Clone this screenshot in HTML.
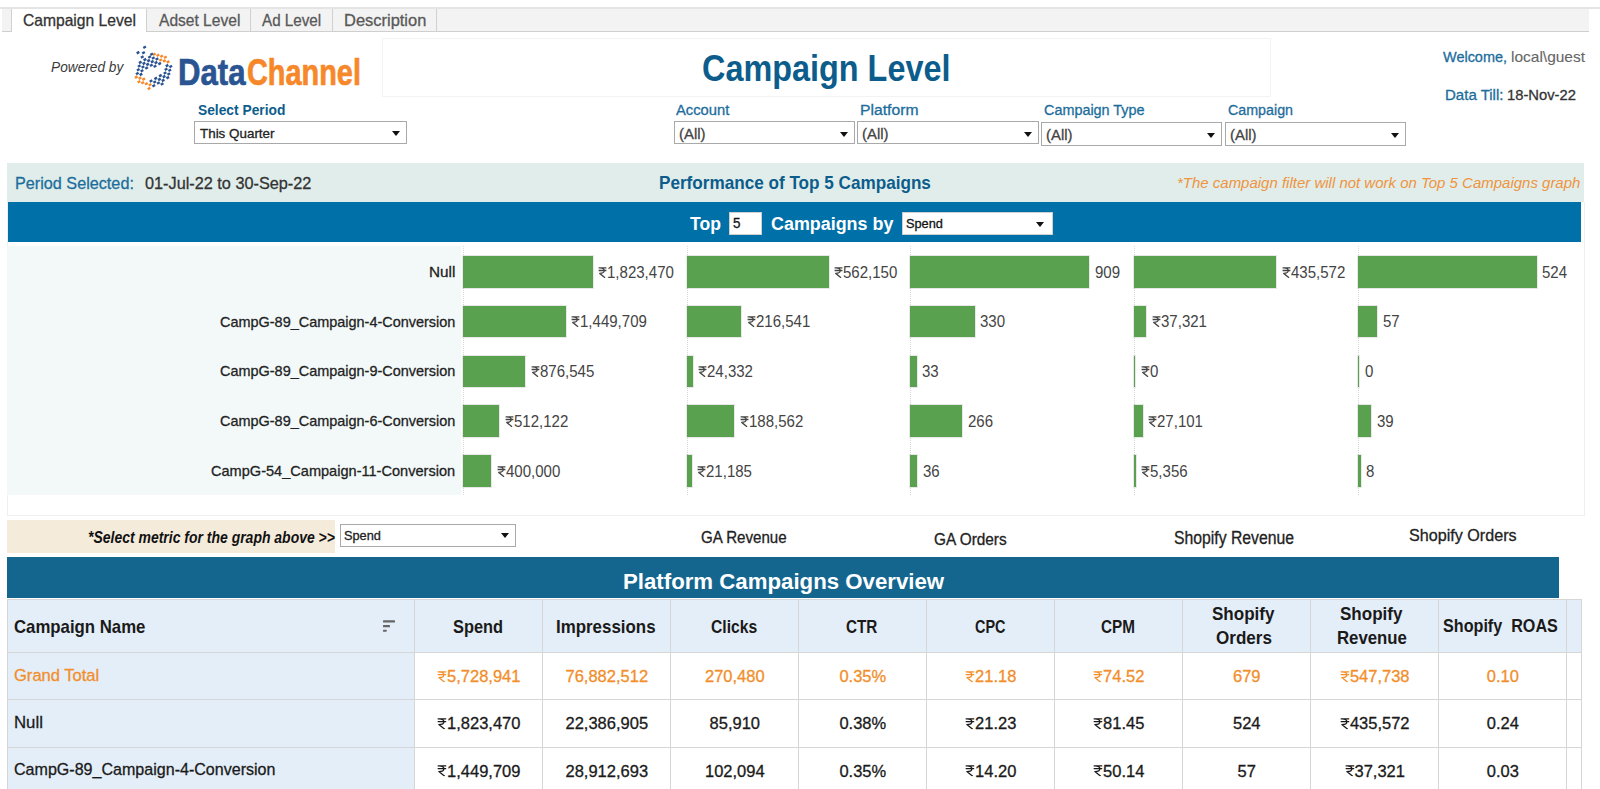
<!DOCTYPE html>
<html><head><meta charset="utf-8"><title>Campaign Level</title>
<style>
html,body{margin:0;padding:0;background:#fff;}
body{width:1600px;height:789px;overflow:hidden;position:relative;font-family:"Liberation Sans",sans-serif;}
.t{position:absolute;white-space:pre;line-height:1;transform-origin:0 0;}
.b{position:absolute;}
.rp{width:0.6em;height:0.688em;vertical-align:baseline;overflow:visible;}
</style></head><body>
<svg width="0" height="0" style="position:absolute"><defs><symbol id="rup" viewBox="0 0 60 69"><path d="M4,5 H56 M4,22 H56 M13,5 C52,5 52,40 11,40 L47,68" fill="none" stroke="currentColor" stroke-width="8" stroke-linejoin="round"/></symbol></defs></svg>
<div class="b" style="left:0px;top:7px;width:1600px;height:2px;background:#e4e4e4;"></div>
<div class="b" style="left:2px;top:9px;width:1587px;height:22px;background:#f3f3f3;"></div>
<div class="b" style="left:2px;top:31px;width:1587px;height:1px;background:#cfcfcf;"></div>
<div class="b" style="left:11px;top:9px;width:1px;height:23px;background:#d0d0d0;"></div>
<div class="b" style="left:12px;top:9px;width:134px;height:23px;background:#ffffff;"></div>
<div class="b" style="left:146px;top:9px;width:1px;height:22px;background:#d0d0d0;"></div>
<div class="b" style="left:250px;top:9px;width:1px;height:22px;background:#d0d0d0;"></div>
<div class="b" style="left:332px;top:9px;width:1px;height:22px;background:#d0d0d0;"></div>
<div class="b" style="left:436px;top:9px;width:1px;height:22px;background:#d0d0d0;"></div>
<div class="t" style="left:23.00px;top:11.82px;font-size:16.28px;color:#333;transform:scaleX(0.9605);-webkit-text-stroke:0.3px #333;">Campaign Level</div>
<div class="t" style="left:158.60px;top:11.82px;font-size:16.28px;color:#595959;transform:scaleX(0.9569);-webkit-text-stroke:0.3px #595959;">Adset Level</div>
<div class="t" style="left:262.40px;top:11.82px;font-size:16.28px;color:#595959;transform:scaleX(0.9344);-webkit-text-stroke:0.3px #595959;">Ad Level</div>
<div class="t" style="left:343.60px;top:11.82px;font-size:16.28px;color:#595959;transform:scaleX(1.0119);-webkit-text-stroke:0.3px #595959;">Description</div>
<div class="b" style="left:382px;top:38px;width:889px;height:59px;border:1px solid #f3f3f3;box-sizing:border-box;"></div>
<div class="t" style="left:50.50px;top:60.32px;font-size:14.97px;color:#3a3a3a;font-style:italic;transform:scaleX(0.9145);">Powered by</div>
<svg class="b" style="left:130px;top:42px;width:50px;height:52px" viewBox="130 42 50 52"><rect x="134.78" y="75.91" width="3.0" height="2.4" fill="#f7892b" transform="rotate(-30 136.28 77.11)"/><rect x="137.48" y="80.59" width="3.0" height="2.4" fill="#f7892b" transform="rotate(-30 138.98 81.79)"/><rect x="135.77" y="72.22" width="3.0" height="2.4" fill="#2b5592" transform="rotate(-30 137.27 73.42)"/><rect x="138.47" y="76.90" width="3.0" height="2.4" fill="#f7892b" transform="rotate(-30 139.97 78.10)"/><rect x="141.17" y="81.58" width="3.0" height="2.4" fill="#f7892b" transform="rotate(-30 142.67 82.78)"/><rect x="136.76" y="68.54" width="3.0" height="2.4" fill="#2b5592" transform="rotate(-30 138.26 69.74)"/><rect x="139.46" y="73.21" width="3.0" height="2.4" fill="#2b5592" transform="rotate(-30 140.96 74.41)"/><rect x="142.16" y="77.89" width="3.0" height="2.4" fill="#f7892b" transform="rotate(-30 143.66 79.09)"/><rect x="144.86" y="82.56" width="3.0" height="2.4" fill="#f7892b" transform="rotate(-30 146.36 83.76)"/><rect x="147.56" y="87.24" width="3.0" height="2.4" fill="#f7892b" transform="rotate(-30 149.06 88.44)"/><rect x="137.75" y="64.85" width="3.0" height="2.4" fill="#2b5592" transform="rotate(-30 139.25 66.05)"/><rect x="140.45" y="69.52" width="3.0" height="2.4" fill="#2b5592" transform="rotate(-30 141.95 70.72)"/><rect x="148.55" y="83.55" width="3.0" height="2.4" fill="#f7892b" transform="rotate(-30 150.05 84.75)"/><rect x="138.74" y="61.16" width="3.0" height="2.4" fill="#2b5592" transform="rotate(-30 140.24 62.36)"/><rect x="141.44" y="65.84" width="3.0" height="2.4" fill="#2b5592" transform="rotate(-30 142.94 67.04)"/><rect x="149.54" y="79.86" width="3.0" height="2.4" fill="#2b5592" transform="rotate(-30 151.04 81.06)"/><rect x="152.24" y="84.54" width="3.0" height="2.4" fill="#2b5592" transform="rotate(-30 153.74 85.74)"/><rect x="142.42" y="62.15" width="3.0" height="2.4" fill="#2b5592" transform="rotate(-30 143.92 63.35)"/><rect x="145.12" y="66.82" width="3.0" height="2.4" fill="#2b5592" transform="rotate(-30 146.62 68.02)"/><rect x="153.22" y="80.85" width="3.0" height="2.4" fill="#2b5592" transform="rotate(-30 154.72 82.05)"/><rect x="143.41" y="58.46" width="3.0" height="2.4" fill="#2b5592" transform="rotate(-30 144.91 59.66)"/><rect x="146.11" y="63.14" width="3.0" height="2.4" fill="#2b5592" transform="rotate(-30 147.61 64.34)"/><rect x="154.21" y="77.16" width="3.0" height="2.4" fill="#2b5592" transform="rotate(-30 155.71 78.36)"/><rect x="156.91" y="81.84" width="3.0" height="2.4" fill="#2b5592" transform="rotate(-30 158.41 83.04)"/><rect x="147.10" y="59.45" width="3.0" height="2.4" fill="#2b5592" transform="rotate(-30 148.60 60.65)"/><rect x="149.80" y="64.12" width="3.0" height="2.4" fill="#2b5592" transform="rotate(-30 151.30 65.32)"/><rect x="157.90" y="78.15" width="3.0" height="2.4" fill="#2b5592" transform="rotate(-30 159.40 79.35)"/><rect x="160.60" y="82.83" width="3.0" height="2.4" fill="#2b5592" transform="rotate(-30 162.10 84.03)"/><rect x="148.09" y="55.76" width="3.0" height="2.4" fill="#2b5592" transform="rotate(-30 149.59 56.96)"/><rect x="150.79" y="60.44" width="3.0" height="2.4" fill="#2b5592" transform="rotate(-30 152.29 61.64)"/><rect x="153.49" y="65.11" width="3.0" height="2.4" fill="#2b5592" transform="rotate(-30 154.99 66.31)"/><rect x="158.89" y="74.46" width="3.0" height="2.4" fill="#2b5592" transform="rotate(-30 160.39 75.66)"/><rect x="161.59" y="79.14" width="3.0" height="2.4" fill="#2b5592" transform="rotate(-30 163.09 80.34)"/><rect x="151.78" y="56.75" width="3.0" height="2.4" fill="#2b5592" transform="rotate(-30 153.28 57.95)"/><rect x="154.48" y="61.42" width="3.0" height="2.4" fill="#2b5592" transform="rotate(-30 155.98 62.62)"/><rect x="162.58" y="75.45" width="3.0" height="2.4" fill="#2b5592" transform="rotate(-30 164.08 76.65)"/><rect x="152.76" y="53.06" width="3.0" height="2.4" fill="#f7892b" transform="rotate(-30 154.26 54.26)"/><rect x="155.46" y="57.74" width="3.0" height="2.4" fill="#2b5592" transform="rotate(-30 156.96 58.94)"/><rect x="158.16" y="62.41" width="3.0" height="2.4" fill="#2b5592" transform="rotate(-30 159.66 63.61)"/><rect x="163.56" y="71.76" width="3.0" height="2.4" fill="#2b5592" transform="rotate(-30 165.06 72.96)"/><rect x="166.26" y="76.44" width="3.0" height="2.4" fill="#2b5592" transform="rotate(-30 167.76 77.64)"/><rect x="156.45" y="54.05" width="3.0" height="2.4" fill="#f7892b" transform="rotate(-30 157.95 55.25)"/><rect x="159.15" y="58.72" width="3.0" height="2.4" fill="#f7892b" transform="rotate(-30 160.65 59.92)"/><rect x="164.55" y="68.08" width="3.0" height="2.4" fill="#2b5592" transform="rotate(-30 166.05 69.28)"/><rect x="167.25" y="72.75" width="3.0" height="2.4" fill="#2b5592" transform="rotate(-30 168.75 73.95)"/><rect x="160.14" y="55.04" width="3.0" height="2.4" fill="#f7892b" transform="rotate(-30 161.64 56.24)"/><rect x="162.84" y="59.71" width="3.0" height="2.4" fill="#f7892b" transform="rotate(-30 164.34 60.91)"/><rect x="165.54" y="64.39" width="3.0" height="2.4" fill="#2b5592" transform="rotate(-30 167.04 65.59)"/><rect x="168.24" y="69.06" width="3.0" height="2.4" fill="#2b5592" transform="rotate(-30 169.74 70.26)"/><rect x="163.83" y="56.02" width="3.0" height="2.4" fill="#f7892b" transform="rotate(-30 165.33 57.22)"/><rect x="166.53" y="60.70" width="3.0" height="2.4" fill="#f7892b" transform="rotate(-30 168.03 61.90)"/><rect x="169.23" y="65.38" width="3.0" height="2.4" fill="#2b5592" transform="rotate(-30 170.73 66.58)"/><rect x="143.10" y="46.10" width="3.0" height="2.4" fill="#2b5592" transform="rotate(-30 144.60 47.30)"/><rect x="136.50" y="51.40" width="3.0" height="2.4" fill="#2b5592" transform="rotate(-30 138.00 52.60)"/><rect x="142.00" y="51.60" width="3.0" height="2.4" fill="#2b5592" transform="rotate(-30 143.50 52.80)"/><rect x="140.70" y="55.80" width="3.0" height="2.4" fill="#2b5592" transform="rotate(-30 142.20 57.00)"/><rect x="150.10" y="53.00" width="3.0" height="2.4" fill="#2b5592" transform="rotate(-30 151.60 54.20)"/></svg>
<div class="t" style="left:177.60px;top:54.12px;font-size:37.06px;color:#2a5592;font-weight:bold;transform:scaleX(0.8402);-webkit-text-stroke:0.7px #2a5592;">Data</div>
<div class="t" style="left:247.40px;top:54.12px;font-size:37.06px;color:#f7882a;font-weight:bold;transform:scaleX(0.7797);-webkit-text-stroke:0.7px #f7882a;">Channel</div>
<div class="t" style="left:702.30px;top:50.83px;font-size:36.34px;color:#0c5d8c;font-weight:bold;transform:scaleX(0.8917);">Campaign Level</div>
<div class="t" style="left:1443.30px;top:49.82px;font-size:14.97px;color:#1c6d9c;transform:scaleX(0.9656);-webkit-text-stroke:0.3px #1c6d9c;">Welcome,</div>
<div class="t" style="left:1511.00px;top:49.82px;font-size:14.97px;color:#666;transform:scaleX(1.0339);-webkit-text-stroke:0.1px #666;">local\guest</div>
<div class="t" style="left:1444.90px;top:88.17px;font-size:14.68px;color:#1c6d9c;transform:scaleX(1.0243);-webkit-text-stroke:0.3px #1c6d9c;">Data Till:</div>
<div class="t" style="left:1507.00px;top:88.17px;font-size:14.68px;color:#333;transform:scaleX(1.0067);-webkit-text-stroke:0.3px #333;">18-Nov-22</div>
<div class="t" style="left:198.30px;top:103.24px;font-size:14.24px;color:#0c5d8c;font-weight:bold;transform:scaleX(0.9684);">Select Period</div>
<div class="b" style="left:194px;top:121px;width:213px;height:23px;background:#fff;border:1px solid #a9a9a9;box-sizing:border-box;"></div>
<div class="t" style="left:199.50px;top:127.22px;font-size:13.08px;color:#222;transform:scaleX(1.0248);-webkit-text-stroke:0.3px #222;">This Quarter</div>
<div class="b" style="left:392px;top:131px;width:0;height:0;border-left:4px solid transparent;border-right:4px solid transparent;border-top:5px solid #111;"></div>
<div class="t" style="left:676.25px;top:103.20px;font-size:14.83px;color:#1c6d9c;transform:scaleX(0.9940);-webkit-text-stroke:0.3px #1c6d9c;">Account</div>
<div class="b" style="left:674px;top:121px;width:181px;height:23px;background:#fff;border:1px solid #a9a9a9;box-sizing:border-box;"></div>
<div class="t" style="left:678.50px;top:126.89px;font-size:14.53px;color:#444;transform:scaleX(1.0257);-webkit-text-stroke:0.3px #444;">(All)</div>
<div class="b" style="left:840px;top:131.5px;width:0;height:0;border-left:4px solid transparent;border-right:4px solid transparent;border-top:5px solid #111;"></div>
<div class="t" style="left:860.00px;top:103.20px;font-size:14.83px;color:#1c6d9c;transform:scaleX(1.0598);-webkit-text-stroke:0.3px #1c6d9c;">Platform</div>
<div class="b" style="left:857px;top:121px;width:182px;height:23px;background:#fff;border:1px solid #a9a9a9;box-sizing:border-box;"></div>
<div class="t" style="left:861.50px;top:126.89px;font-size:14.53px;color:#444;transform:scaleX(1.0257);-webkit-text-stroke:0.3px #444;">(All)</div>
<div class="b" style="left:1024px;top:131.5px;width:0;height:0;border-left:4px solid transparent;border-right:4px solid transparent;border-top:5px solid #111;"></div>
<div class="t" style="left:1043.75px;top:103.20px;font-size:14.83px;color:#1c6d9c;transform:scaleX(0.9703);-webkit-text-stroke:0.3px #1c6d9c;">Campaign Type</div>
<div class="b" style="left:1041px;top:122px;width:181px;height:24px;background:#fff;border:1px solid #a9a9a9;box-sizing:border-box;"></div>
<div class="t" style="left:1045.50px;top:127.89px;font-size:14.53px;color:#444;transform:scaleX(1.0257);-webkit-text-stroke:0.3px #444;">(All)</div>
<div class="b" style="left:1207px;top:132.5px;width:0;height:0;border-left:4px solid transparent;border-right:4px solid transparent;border-top:5px solid #111;"></div>
<div class="t" style="left:1227.50px;top:103.20px;font-size:14.83px;color:#1c6d9c;transform:scaleX(0.9618);-webkit-text-stroke:0.3px #1c6d9c;">Campaign</div>
<div class="b" style="left:1225px;top:122px;width:181px;height:24px;background:#fff;border:1px solid #a9a9a9;box-sizing:border-box;"></div>
<div class="t" style="left:1229.50px;top:127.89px;font-size:14.53px;color:#444;transform:scaleX(1.0257);-webkit-text-stroke:0.3px #444;">(All)</div>
<div class="b" style="left:1391px;top:132.5px;width:0;height:0;border-left:4px solid transparent;border-right:4px solid transparent;border-top:5px solid #111;"></div>
<div class="b" style="left:7px;top:163px;width:1577px;height:39px;background:#e0edea;"></div>
<div class="t" style="left:14.85px;top:175.01px;font-size:17.30px;color:#1c6d9c;transform:scaleX(0.9376);-webkit-text-stroke:0.3px #1c6d9c;">Period Selected:</div>
<div class="t" style="left:145.40px;top:175.01px;font-size:17.30px;color:#333;transform:scaleX(0.9411);-webkit-text-stroke:0.3px #333;">01-Jul-22 to 30-Sep-22</div>
<div class="t" style="left:659.00px;top:174.14px;font-size:18.02px;color:#0c5d8c;font-weight:bold;transform:scaleX(0.9507);">Performance of Top 5 Campaigns</div>
<div class="t" style="left:1176.50px;top:174.58px;font-size:15.26px;color:#ef9440;font-style:italic;transform:scaleX(0.9825);">*The campaign filter will not work on Top 5 Campaigns graph</div>
<div class="b" style="left:8px;top:202px;width:1573px;height:40px;background:#0070a9;"></div>
<div class="t" style="left:690.00px;top:214.90px;font-size:18.90px;color:#fff;font-weight:bold;transform:scaleX(0.9300);">Top</div>
<div class="b" style="left:729px;top:212px;width:33px;height:23px;background:#fff;border:1px solid #cfcfcf;box-sizing:border-box;"></div>
<div class="t" style="left:733.40px;top:216.19px;font-size:14.53px;color:#111;transform:scaleX(0.9278);-webkit-text-stroke:0.3px #111;">5</div>
<div class="t" style="left:771.40px;top:214.90px;font-size:18.90px;color:#fff;font-weight:bold;transform:scaleX(0.9477);">Campaigns by</div>
<div class="b" style="left:902px;top:212px;width:151px;height:23px;background:#fff;border:1px solid #cfcfcf;box-sizing:border-box;"></div>
<div class="t" style="left:905.60px;top:217.42px;font-size:13.08px;color:#111;transform:scaleX(0.9755);-webkit-text-stroke:0.3px #111;">Spend</div>
<div class="b" style="left:1036px;top:222px;width:0;height:0;border-left:4px solid transparent;border-right:4px solid transparent;border-top:5px solid #111;"></div>
<div class="b" style="left:7px;top:202px;width:1578px;height:314px;border-left:1px solid #efefef;border-right:1px solid #efefef;border-bottom:1px solid #efefef;box-sizing:border-box;"></div>
<div class="b" style="left:7px;top:246px;width:454px;height:249px;background:#f3f9f9;"></div>
<div class="b" style="left:463.0px;top:246px;width:0;height:249px;border-left:1px dotted #d8d8d8;"></div>
<div class="b" style="left:686.5px;top:246px;width:0;height:249px;border-left:1px dotted #d8d8d8;"></div>
<div class="b" style="left:910.0px;top:246px;width:0;height:249px;border-left:1px dotted #d8d8d8;"></div>
<div class="b" style="left:1134.0px;top:246px;width:0;height:249px;border-left:1px dotted #d8d8d8;"></div>
<div class="b" style="left:1358.0px;top:246px;width:0;height:249px;border-left:1px dotted #d8d8d8;"></div>
<div class="t" style="left:429.20px;top:263.95px;font-size:15.41px;color:#222;transform:scaleX(0.9909);-webkit-text-stroke:0.3px #222;">Null</div>
<div class="t" style="left:220.10px;top:313.75px;font-size:15.41px;color:#222;transform:scaleX(0.9382);-webkit-text-stroke:0.3px #222;">CampG-89_Campaign-4-Conversion</div>
<div class="t" style="left:220.10px;top:363.45px;font-size:15.41px;color:#222;transform:scaleX(0.9382);-webkit-text-stroke:0.3px #222;">CampG-89_Campaign-9-Conversion</div>
<div class="t" style="left:220.10px;top:413.15px;font-size:15.41px;color:#222;transform:scaleX(0.9382);-webkit-text-stroke:0.3px #222;">CampG-89_Campaign-6-Conversion</div>
<div class="t" style="left:211.40px;top:462.95px;font-size:15.41px;color:#222;transform:scaleX(0.9449);-webkit-text-stroke:0.3px #222;">CampG-54_Campaign-11-Conversion</div>
<div class="b" style="left:463.0px;top:256.0px;width:129.5px;height:31.5px;background:#59a14f;box-shadow:0 0 0 1px rgba(0,0,0,0.09);"></div>
<div class="t" style="left:598.00px;top:264.66px;font-size:15.99px;color:#444;transform:scaleX(0.9400);"><svg class="rp" viewBox="0 0 60 69"><use href="#rup"/></svg>1,823,470</div>
<div class="b" style="left:463.0px;top:305.8px;width:103.0px;height:31.5px;background:#59a14f;box-shadow:0 0 0 1px rgba(0,0,0,0.09);"></div>
<div class="t" style="left:571.46px;top:314.46px;font-size:15.99px;color:#444;transform:scaleX(0.9400);"><svg class="rp" viewBox="0 0 60 69"><use href="#rup"/></svg>1,449,709</div>
<div class="b" style="left:463.0px;top:355.5px;width:62.3px;height:31.5px;background:#59a14f;box-shadow:0 0 0 1px rgba(0,0,0,0.09);"></div>
<div class="t" style="left:530.75px;top:364.16px;font-size:15.99px;color:#444;transform:scaleX(0.9400);"><svg class="rp" viewBox="0 0 60 69"><use href="#rup"/></svg>876,545</div>
<div class="b" style="left:463.0px;top:405.2px;width:36.4px;height:31.5px;background:#59a14f;box-shadow:0 0 0 1px rgba(0,0,0,0.09);"></div>
<div class="t" style="left:504.87px;top:413.86px;font-size:15.99px;color:#444;transform:scaleX(0.9400);"><svg class="rp" viewBox="0 0 60 69"><use href="#rup"/></svg>512,122</div>
<div class="b" style="left:463.0px;top:455.0px;width:28.4px;height:31.5px;background:#59a14f;box-shadow:0 0 0 1px rgba(0,0,0,0.09);"></div>
<div class="t" style="left:496.91px;top:463.66px;font-size:15.99px;color:#444;transform:scaleX(0.9400);"><svg class="rp" viewBox="0 0 60 69"><use href="#rup"/></svg>400,000</div>
<div class="b" style="left:686.5px;top:256.0px;width:142.0px;height:31.5px;background:#59a14f;box-shadow:0 0 0 1px rgba(0,0,0,0.09);"></div>
<div class="t" style="left:834.00px;top:264.66px;font-size:15.99px;color:#444;transform:scaleX(0.9400);"><svg class="rp" viewBox="0 0 60 69"><use href="#rup"/></svg>562,150</div>
<div class="b" style="left:686.5px;top:305.8px;width:54.7px;height:31.5px;background:#59a14f;box-shadow:0 0 0 1px rgba(0,0,0,0.09);"></div>
<div class="t" style="left:746.70px;top:314.46px;font-size:15.99px;color:#444;transform:scaleX(0.9400);"><svg class="rp" viewBox="0 0 60 69"><use href="#rup"/></svg>216,541</div>
<div class="b" style="left:686.5px;top:355.5px;width:6.1px;height:31.5px;background:#59a14f;box-shadow:0 0 0 1px rgba(0,0,0,0.09);"></div>
<div class="t" style="left:698.15px;top:364.16px;font-size:15.99px;color:#444;transform:scaleX(0.9400);"><svg class="rp" viewBox="0 0 60 69"><use href="#rup"/></svg>24,332</div>
<div class="b" style="left:686.5px;top:405.2px;width:47.6px;height:31.5px;background:#59a14f;box-shadow:0 0 0 1px rgba(0,0,0,0.09);"></div>
<div class="t" style="left:739.63px;top:413.86px;font-size:15.99px;color:#444;transform:scaleX(0.9400);"><svg class="rp" viewBox="0 0 60 69"><use href="#rup"/></svg>188,562</div>
<div class="b" style="left:686.5px;top:455.0px;width:5.4px;height:31.5px;background:#59a14f;box-shadow:0 0 0 1px rgba(0,0,0,0.09);"></div>
<div class="t" style="left:697.35px;top:463.66px;font-size:15.99px;color:#444;transform:scaleX(0.9400);"><svg class="rp" viewBox="0 0 60 69"><use href="#rup"/></svg>21,185</div>
<div class="b" style="left:910.0px;top:256.0px;width:179.0px;height:31.5px;background:#59a14f;box-shadow:0 0 0 1px rgba(0,0,0,0.09);"></div>
<div class="t" style="left:1094.50px;top:264.66px;font-size:15.99px;color:#444;transform:scaleX(0.9400);">909</div>
<div class="b" style="left:910.0px;top:305.8px;width:65.0px;height:31.5px;background:#59a14f;box-shadow:0 0 0 1px rgba(0,0,0,0.09);"></div>
<div class="t" style="left:980.48px;top:314.46px;font-size:15.99px;color:#444;transform:scaleX(0.9400);">330</div>
<div class="b" style="left:910.0px;top:355.5px;width:6.5px;height:31.5px;background:#59a14f;box-shadow:0 0 0 1px rgba(0,0,0,0.09);"></div>
<div class="t" style="left:922.00px;top:364.16px;font-size:15.99px;color:#444;transform:scaleX(0.9400);">33</div>
<div class="b" style="left:910.0px;top:405.2px;width:52.4px;height:31.5px;background:#59a14f;box-shadow:0 0 0 1px rgba(0,0,0,0.09);"></div>
<div class="t" style="left:967.88px;top:413.86px;font-size:15.99px;color:#444;transform:scaleX(0.9400);">266</div>
<div class="b" style="left:910.0px;top:455.0px;width:7.1px;height:31.5px;background:#59a14f;box-shadow:0 0 0 1px rgba(0,0,0,0.09);"></div>
<div class="t" style="left:922.59px;top:463.66px;font-size:15.99px;color:#444;transform:scaleX(0.9400);">36</div>
<div class="b" style="left:1134.0px;top:256.0px;width:142.0px;height:31.5px;background:#59a14f;box-shadow:0 0 0 1px rgba(0,0,0,0.09);"></div>
<div class="t" style="left:1281.50px;top:264.66px;font-size:15.99px;color:#444;transform:scaleX(0.9400);"><svg class="rp" viewBox="0 0 60 69"><use href="#rup"/></svg>435,572</div>
<div class="b" style="left:1134.0px;top:305.8px;width:12.2px;height:31.5px;background:#59a14f;box-shadow:0 0 0 1px rgba(0,0,0,0.09);"></div>
<div class="t" style="left:1151.67px;top:314.46px;font-size:15.99px;color:#444;transform:scaleX(0.9400);"><svg class="rp" viewBox="0 0 60 69"><use href="#rup"/></svg>37,321</div>
<div class="b" style="left:1134.0px;top:355.5px;width:1.2px;height:31.5px;background:#59a14f;box-shadow:0 0 0 1px rgba(0,0,0,0.09);"></div>
<div class="t" style="left:1140.70px;top:364.16px;font-size:15.99px;color:#444;transform:scaleX(0.9400);"><svg class="rp" viewBox="0 0 60 69"><use href="#rup"/></svg>0</div>
<div class="b" style="left:1134.0px;top:405.2px;width:8.8px;height:31.5px;background:#59a14f;box-shadow:0 0 0 1px rgba(0,0,0,0.09);"></div>
<div class="t" style="left:1148.34px;top:413.86px;font-size:15.99px;color:#444;transform:scaleX(0.9400);"><svg class="rp" viewBox="0 0 60 69"><use href="#rup"/></svg>27,101</div>
<div class="b" style="left:1134.0px;top:455.0px;width:1.7px;height:31.5px;background:#59a14f;box-shadow:0 0 0 1px rgba(0,0,0,0.09);"></div>
<div class="t" style="left:1141.25px;top:463.66px;font-size:15.99px;color:#444;transform:scaleX(0.9400);"><svg class="rp" viewBox="0 0 60 69"><use href="#rup"/></svg>5,356</div>
<div class="b" style="left:1358.0px;top:256.0px;width:178.5px;height:31.5px;background:#59a14f;box-shadow:0 0 0 1px rgba(0,0,0,0.09);"></div>
<div class="t" style="left:1542.00px;top:264.66px;font-size:15.99px;color:#444;transform:scaleX(0.9400);">524</div>
<div class="b" style="left:1358.0px;top:305.8px;width:19.4px;height:31.5px;background:#59a14f;box-shadow:0 0 0 1px rgba(0,0,0,0.09);"></div>
<div class="t" style="left:1382.92px;top:314.46px;font-size:15.99px;color:#444;transform:scaleX(0.9400);">57</div>
<div class="b" style="left:1358.0px;top:355.5px;width:1.2px;height:31.5px;background:#59a14f;box-shadow:0 0 0 1px rgba(0,0,0,0.09);"></div>
<div class="t" style="left:1364.70px;top:364.16px;font-size:15.99px;color:#444;transform:scaleX(0.9400);">0</div>
<div class="b" style="left:1358.0px;top:405.2px;width:13.3px;height:31.5px;background:#59a14f;box-shadow:0 0 0 1px rgba(0,0,0,0.09);"></div>
<div class="t" style="left:1376.79px;top:413.86px;font-size:15.99px;color:#444;transform:scaleX(0.9400);">39</div>
<div class="b" style="left:1358.0px;top:455.0px;width:2.7px;height:31.5px;background:#59a14f;box-shadow:0 0 0 1px rgba(0,0,0,0.09);"></div>
<div class="t" style="left:1366.23px;top:463.66px;font-size:15.99px;color:#444;transform:scaleX(0.9400);">8</div>
<div class="b" style="left:7px;top:520px;width:328px;height:33px;background:#f5ebdb;"></div>
<div class="t" style="left:87.70px;top:529.76px;font-size:15.99px;color:#111;font-weight:bold;font-style:italic;transform:scaleX(0.8741);">*Select metric for the graph above &gt;&gt;</div>
<div class="b" style="left:340px;top:524px;width:176px;height:23px;background:#fff;border:1px solid #a9a9a9;box-sizing:border-box;"></div>
<div class="t" style="left:344.00px;top:529.42px;font-size:13.08px;color:#222;transform:scaleX(0.9755);-webkit-text-stroke:0.3px #222;">Spend</div>
<div class="b" style="left:501px;top:533px;width:0;height:0;border-left:4px solid transparent;border-right:4px solid transparent;border-top:5px solid #111;"></div>
<div class="t" style="left:700.50px;top:528.64px;font-size:16.13px;color:#222;transform:scaleX(0.9378);-webkit-text-stroke:0.3px #222;">GA Revenue</div>
<div class="t" style="left:934.00px;top:530.74px;font-size:16.13px;color:#222;transform:scaleX(0.9552);-webkit-text-stroke:0.3px #222;">GA Orders</div>
<div class="t" style="left:1173.90px;top:529.63px;font-size:17.44px;color:#222;transform:scaleX(0.9041);-webkit-text-stroke:0.3px #222;">Shopify Revenue</div>
<div class="t" style="left:1409.30px;top:528.25px;font-size:16.72px;color:#222;transform:scaleX(0.9661);-webkit-text-stroke:0.3px #222;">Shopify Orders</div>
<div class="b" style="left:7px;top:557px;width:1552px;height:40.5px;background:#15668f;"></div>
<div class="t" style="left:622.50px;top:569.56px;font-size:22.97px;color:#fff;font-weight:bold;transform:scaleX(0.9674);">Platform Campaigns Overview</div>
<div class="b" style="left:7px;top:599.5px;width:1574px;height:52.5px;background:#e4eef8;"></div>
<div class="b" style="left:7px;top:652px;width:407px;height:137px;background:#e4eef8;"></div>
<div class="b" style="left:414px;top:652px;width:1167px;height:137px;background:#fff;"></div>
<div class="b" style="left:7px;top:599px;width:1574px;height:1px;background:#d6d6d6;"></div>
<div class="b" style="left:7px;top:651.5px;width:1574px;height:1px;background:#d6d6d6;"></div>
<div class="b" style="left:7px;top:699px;width:1574px;height:1px;background:#d6d6d6;"></div>
<div class="b" style="left:7px;top:746.5px;width:1574px;height:1px;background:#d6d6d6;"></div>
<div class="b" style="left:414px;top:599px;width:1px;height:190px;background:#d6d6d6;"></div>
<div class="b" style="left:542px;top:599px;width:1px;height:190px;background:#d6d6d6;"></div>
<div class="b" style="left:670px;top:599px;width:1px;height:190px;background:#d6d6d6;"></div>
<div class="b" style="left:798px;top:599px;width:1px;height:190px;background:#d6d6d6;"></div>
<div class="b" style="left:926px;top:599px;width:1px;height:190px;background:#d6d6d6;"></div>
<div class="b" style="left:1054px;top:599px;width:1px;height:190px;background:#d6d6d6;"></div>
<div class="b" style="left:1182px;top:599px;width:1px;height:190px;background:#d6d6d6;"></div>
<div class="b" style="left:1310px;top:599px;width:1px;height:190px;background:#d6d6d6;"></div>
<div class="b" style="left:1438px;top:599px;width:1px;height:190px;background:#d6d6d6;"></div>
<div class="b" style="left:1566px;top:599px;width:1px;height:190px;background:#d6d6d6;"></div>
<div class="b" style="left:1581px;top:599px;width:1px;height:190px;background:#d6d6d6;"></div>
<div class="b" style="left:7px;top:599px;width:1px;height:190px;background:#d6d6d6;"></div>
<div class="t" style="left:14.30px;top:618.04px;font-size:18.02px;color:#1a1a1a;font-weight:bold;transform:scaleX(0.9312);">Campaign Name</div>
<svg class="b" style="left:383px;top:619.5px;width:14px;height:13px" viewBox="0 0 14 13"><rect x="0" y="0.2" width="12" height="2.3" rx="0.5" fill="#666"/><rect x="0" y="4.9" width="7" height="2.3" rx="0.5" fill="#666"/><rect x="0" y="9.7" width="3.6" height="2.1" rx="0.5" fill="#666"/></svg>
<div class="t" style="left:453.00px;top:618.45px;font-size:18.60px;color:#1a1a1a;font-weight:bold;transform:scaleX(0.8795);">Spend</div>
<div class="t" style="left:556.20px;top:618.45px;font-size:18.60px;color:#1a1a1a;font-weight:bold;transform:scaleX(0.9087);">Impressions</div>
<div class="t" style="left:710.90px;top:618.45px;font-size:18.60px;color:#1a1a1a;font-weight:bold;transform:scaleX(0.8428);">Clicks</div>
<div class="t" style="left:846.30px;top:618.45px;font-size:18.60px;color:#1a1a1a;font-weight:bold;transform:scaleX(0.8212);">CTR</div>
<div class="t" style="left:974.75px;top:618.45px;font-size:18.60px;color:#1a1a1a;font-weight:bold;transform:scaleX(0.7764);">CPC</div>
<div class="t" style="left:1101.00px;top:618.45px;font-size:18.60px;color:#1a1a1a;font-weight:bold;transform:scaleX(0.8224);">CPM</div>
<div class="t" style="left:1211.75px;top:605.86px;font-size:17.88px;color:#1a1a1a;font-weight:bold;transform:scaleX(0.9534);">Shopify</div>
<div class="t" style="left:1216.00px;top:629.86px;font-size:17.88px;color:#1a1a1a;font-weight:bold;transform:scaleX(0.9552);">Orders</div>
<div class="t" style="left:1339.75px;top:605.86px;font-size:17.88px;color:#1a1a1a;font-weight:bold;transform:scaleX(0.9534);">Shopify</div>
<div class="t" style="left:1337.00px;top:629.86px;font-size:17.88px;color:#1a1a1a;font-weight:bold;transform:scaleX(0.9393);">Revenue</div>
<div class="t" style="left:1442.50px;top:618.36px;font-size:17.88px;color:#1a1a1a;font-weight:bold;transform:scaleX(0.9045);">Shopify  ROAS</div>
<div class="t" style="left:13.75px;top:667.82px;font-size:16.86px;color:#f28e2b;transform:scaleX(0.9815);-webkit-text-stroke:0.3px #f28e2b;">Grand Total</div>
<div class="t" style="left:437.15px;top:668.33px;font-size:16.50px;color:#f28e2b;-webkit-text-stroke:0.3px #f28e2b;"><svg class="rp" viewBox="0 0 60 69"><use href="#rup"/></svg>5,728,941</div>
<div class="t" style="left:565.51px;top:668.33px;font-size:16.50px;color:#f28e2b;-webkit-text-stroke:0.3px #f28e2b;">76,882,512</div>
<div class="t" style="left:704.98px;top:668.33px;font-size:16.50px;color:#f28e2b;-webkit-text-stroke:0.3px #f28e2b;">270,480</div>
<div class="t" style="left:839.41px;top:668.33px;font-size:16.50px;color:#f28e2b;-webkit-text-stroke:0.3px #f28e2b;">0.35%</div>
<div class="t" style="left:965.20px;top:668.33px;font-size:16.50px;color:#f28e2b;-webkit-text-stroke:0.3px #f28e2b;"><svg class="rp" viewBox="0 0 60 69"><use href="#rup"/></svg>21.18</div>
<div class="t" style="left:1093.20px;top:668.33px;font-size:16.50px;color:#f28e2b;-webkit-text-stroke:0.3px #f28e2b;"><svg class="rp" viewBox="0 0 60 69"><use href="#rup"/></svg>74.52</div>
<div class="t" style="left:1233.03px;top:668.33px;font-size:16.50px;color:#f28e2b;-webkit-text-stroke:0.3px #f28e2b;">679</div>
<div class="t" style="left:1340.03px;top:668.33px;font-size:16.50px;color:#f28e2b;-webkit-text-stroke:0.3px #f28e2b;"><svg class="rp" viewBox="0 0 60 69"><use href="#rup"/></svg>547,738</div>
<div class="t" style="left:1486.74px;top:668.33px;font-size:16.50px;color:#f28e2b;-webkit-text-stroke:0.3px #f28e2b;">0.10</div>
<div class="t" style="left:13.75px;top:714.72px;font-size:16.86px;color:#1a1a1a;transform:scaleX(0.9950);-webkit-text-stroke:0.3px #1a1a1a;">Null</div>
<div class="t" style="left:437.15px;top:715.23px;font-size:16.50px;color:#1a1a1a;-webkit-text-stroke:0.3px #1a1a1a;"><svg class="rp" viewBox="0 0 60 69"><use href="#rup"/></svg>1,823,470</div>
<div class="t" style="left:565.51px;top:715.23px;font-size:16.50px;color:#1a1a1a;-webkit-text-stroke:0.3px #1a1a1a;">22,386,905</div>
<div class="t" style="left:709.57px;top:715.23px;font-size:16.50px;color:#1a1a1a;-webkit-text-stroke:0.3px #1a1a1a;">85,910</div>
<div class="t" style="left:839.41px;top:715.23px;font-size:16.50px;color:#1a1a1a;-webkit-text-stroke:0.3px #1a1a1a;">0.38%</div>
<div class="t" style="left:965.20px;top:715.23px;font-size:16.50px;color:#1a1a1a;-webkit-text-stroke:0.3px #1a1a1a;"><svg class="rp" viewBox="0 0 60 69"><use href="#rup"/></svg>21.23</div>
<div class="t" style="left:1093.20px;top:715.23px;font-size:16.50px;color:#1a1a1a;-webkit-text-stroke:0.3px #1a1a1a;"><svg class="rp" viewBox="0 0 60 69"><use href="#rup"/></svg>81.45</div>
<div class="t" style="left:1233.03px;top:715.23px;font-size:16.50px;color:#1a1a1a;-webkit-text-stroke:0.3px #1a1a1a;">524</div>
<div class="t" style="left:1340.03px;top:715.23px;font-size:16.50px;color:#1a1a1a;-webkit-text-stroke:0.3px #1a1a1a;"><svg class="rp" viewBox="0 0 60 69"><use href="#rup"/></svg>435,572</div>
<div class="t" style="left:1486.74px;top:715.23px;font-size:16.50px;color:#1a1a1a;-webkit-text-stroke:0.3px #1a1a1a;">0.24</div>
<div class="t" style="left:13.75px;top:762.02px;font-size:16.86px;color:#1a1a1a;transform:scaleX(0.9523);-webkit-text-stroke:0.3px #1a1a1a;">CampG-89_Campaign-4-Conversion</div>
<div class="t" style="left:437.15px;top:762.53px;font-size:16.50px;color:#1a1a1a;-webkit-text-stroke:0.3px #1a1a1a;"><svg class="rp" viewBox="0 0 60 69"><use href="#rup"/></svg>1,449,709</div>
<div class="t" style="left:565.51px;top:762.53px;font-size:16.50px;color:#1a1a1a;-webkit-text-stroke:0.3px #1a1a1a;">28,912,693</div>
<div class="t" style="left:704.98px;top:762.53px;font-size:16.50px;color:#1a1a1a;-webkit-text-stroke:0.3px #1a1a1a;">102,094</div>
<div class="t" style="left:839.41px;top:762.53px;font-size:16.50px;color:#1a1a1a;-webkit-text-stroke:0.3px #1a1a1a;">0.35%</div>
<div class="t" style="left:965.20px;top:762.53px;font-size:16.50px;color:#1a1a1a;-webkit-text-stroke:0.3px #1a1a1a;"><svg class="rp" viewBox="0 0 60 69"><use href="#rup"/></svg>14.20</div>
<div class="t" style="left:1093.20px;top:762.53px;font-size:16.50px;color:#1a1a1a;-webkit-text-stroke:0.3px #1a1a1a;"><svg class="rp" viewBox="0 0 60 69"><use href="#rup"/></svg>50.14</div>
<div class="t" style="left:1237.62px;top:762.53px;font-size:16.50px;color:#1a1a1a;-webkit-text-stroke:0.3px #1a1a1a;">57</div>
<div class="t" style="left:1344.62px;top:762.53px;font-size:16.50px;color:#1a1a1a;-webkit-text-stroke:0.3px #1a1a1a;"><svg class="rp" viewBox="0 0 60 69"><use href="#rup"/></svg>37,321</div>
<div class="t" style="left:1486.74px;top:762.53px;font-size:16.50px;color:#1a1a1a;-webkit-text-stroke:0.3px #1a1a1a;">0.03</div>
</body></html>
